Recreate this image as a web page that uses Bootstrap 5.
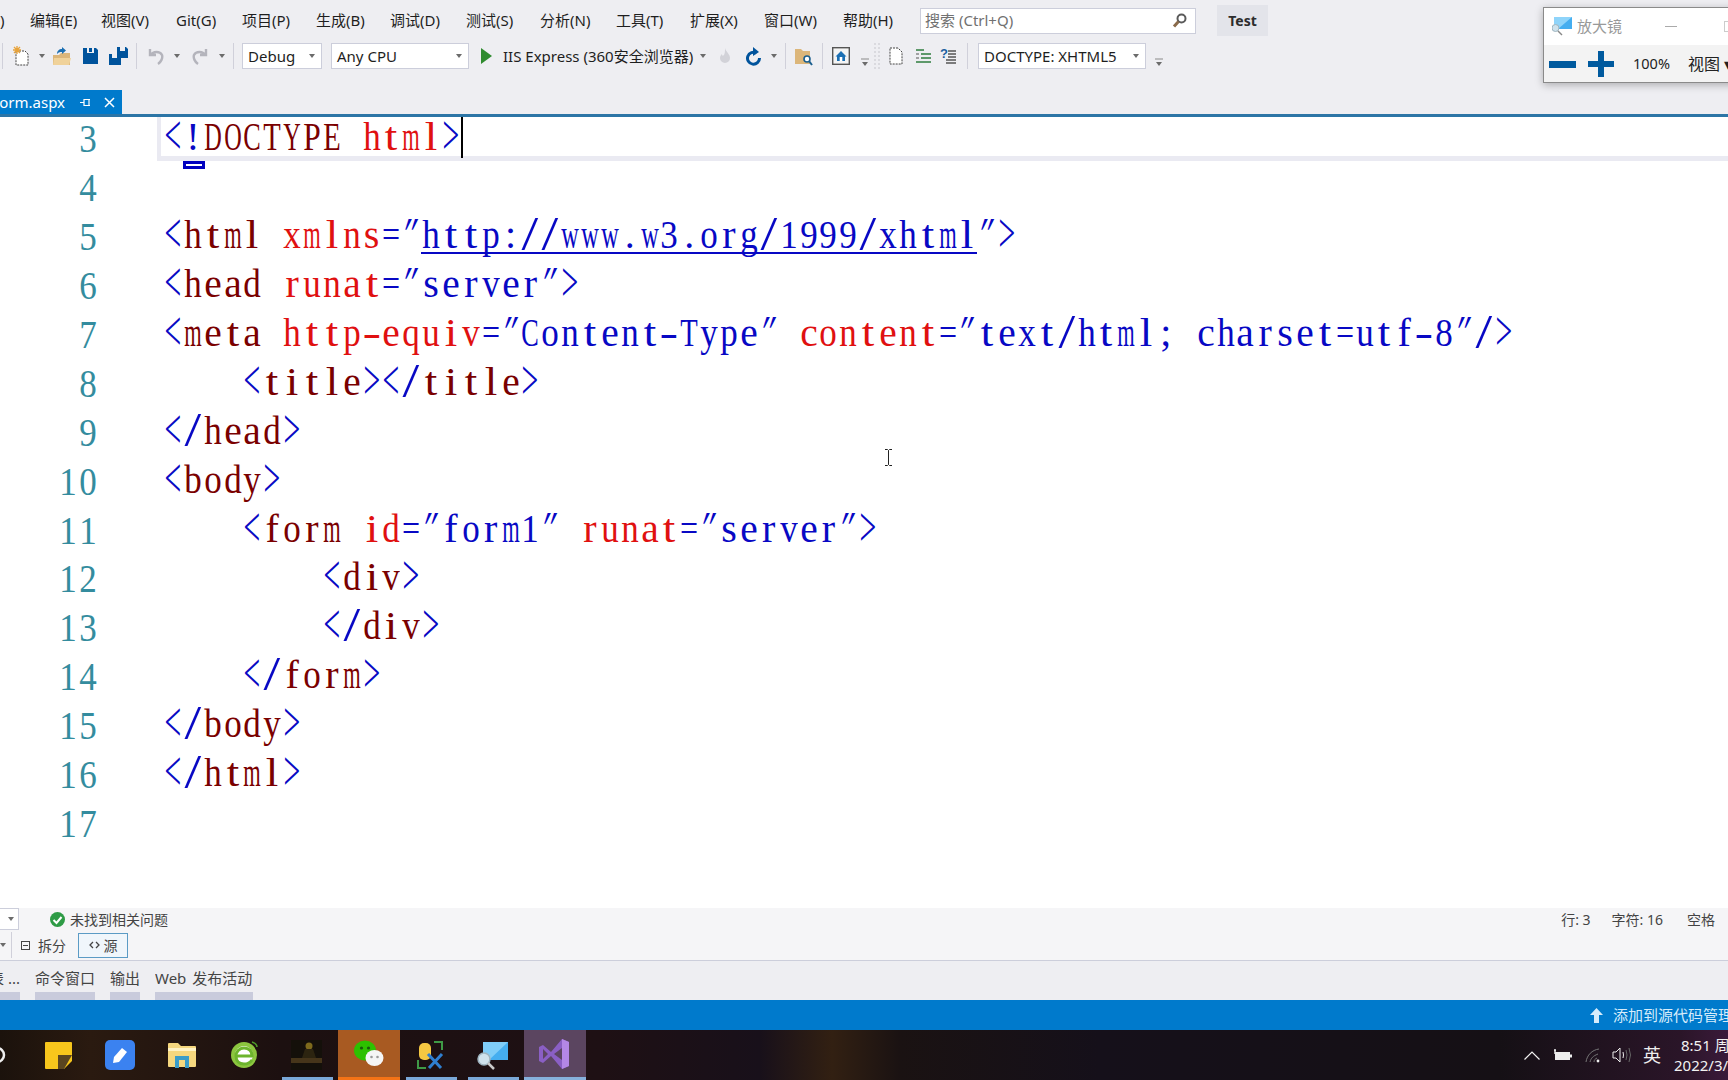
<!DOCTYPE html>
<html lang="zh-CN">
<head>
<meta charset="utf-8">
<title>WebForm.aspx</title>
<link href="https://cdn.jsdelivr.net/npm/bootstrap@5.3.0/dist/css/bootstrap.min.css" rel="stylesheet">
<style>
html,body{height:100%}
body{width:1728px;height:1080px;overflow:hidden;background:#eeeef2;font-family:"Noto Sans","Noto Sans CJK SC",sans-serif;color:#1e1e1e;font-size:15px;position:relative}
.vs-head{height:114px;flex:none}
.menu-row{height:41px;padding-left:0}
.menu-it{white-space:nowrap;line-height:1}
.menu-a{width:30px}.w71{width:71px}.w75{width:75px}.w66{width:66px}.w74{width:74px}.w76{width:76px}.w79{width:79px}.w77{width:77px}
.search-box{width:276px;height:26px;background:#fff;border:1px solid #cccedb;color:#717171;padding:0 8px 0 4px}
.test-btn{width:51px;height:31px;margin-left:21px;background:#e3e4ea;font-weight:700;font-size:14px;color:#2d2d2d}
.tool-row{height:30px;padding-left:2px}
.tool-row svg{flex:none;display:block}
.tsep{width:1px;height:26px;background:#d0d0da;flex:none}
.combo{height:26px;background:#fff;border:1px solid #cccedb;padding:0 6px 0 5px;flex:none;white-space:nowrap}
.combo-d{width:80px}.combo-c{width:138px}.combo-t{width:168px}
.caret-d{width:0;height:0;border-left:3.5px solid transparent;border-right:3.5px solid transparent;border-top:4px solid #6b6b6b;flex:none}
.iis-t{white-space:nowrap;width:191px;flex:none}
.l4{margin-left:4px}.l5{margin-left:5px}.l6{margin-left:6px}.l7{margin-left:7px}.l8{margin-left:8px}.l9{margin-left:9px}.l10{margin-left:10px}.l11{margin-left:11px}.l12{margin-left:12px}.l13{margin-left:13px}.l14{margin-left:14px}.l15{margin-left:15px}.l31{margin-left:31px}
.drop-ic{margin-top:12px}
.tab-row{height:24px;margin-top:19px}
.doc-tab{width:122px;height:24px;background:#007acc;color:#fff;overflow:hidden}
.doc-name{white-space:nowrap;width:65px;display:flex;justify-content:flex-end;flex:none;font-size:15px}
.editor{flex:1 1 0;background:#fff;border-top:3px solid #2c75a6;position:relative;overflow:hidden;min-height:0}
.cur-line{position:absolute;left:157px;right:0;top:0;height:44px;border-left:4px solid #eaeaf2;border-bottom:5px solid #eaeaf2}
.caret-bar{position:absolute;left:461px;top:0;width:2px;height:41px;background:#000}
.squig{position:absolute;left:183px;top:44px;width:22px;height:8px;border:3px solid #0000c0}
.code-wrap{margin-top:-4px;font-family:"Liberation Serif","Noto Sans CJK SC",serif;font-size:40px}
.gut{width:98px;text-align:right;color:#348c9e;flex:none;padding-top:2px}
.codepane{margin-left:65px}
.cl{height:48.95px;line-height:48.95px;white-space:pre}
.gc{display:inline-flex;justify-content:center;width:19.87px;white-space:pre;vertical-align:baseline}
.k-t{color:#7a0000}.k-d{color:#0808c4}.k-a{color:#e01010}
.k-l{color:#0808c4;display:inline-block;background:linear-gradient(#0808c4,#0808c4) 0 41px/100% 2px no-repeat}
.stat-strip{height:53px;flex:none;background:#f5f5f7;border-bottom:1px solid #cccedb;font-size:14px;color:#444}
.stat-a{height:22px}
.stat-b{height:30px}
.left-combo{width:19px;height:22px;background:#fff;border:1px solid #cccedb;border-left:0;flex:none}
.ok-txt{margin-left:5px;color:#444}
.src-btn{width:50px;height:25px;border:1px solid #5b9bc5;background:#f0f6fb;margin-left:12px}
.pos-a{margin-left:auto}
.pos-t{white-space:nowrap}
.pos-1{margin-right:21px}.pos-2{margin-right:24px}.pos-3{margin-right:13px}
.bot-tabs{height:39px;flex:none;font-size:15px;color:#444}
.bt{height:39px;padding-top:6px;white-space:nowrap;line-height:22px;background:linear-gradient(#c9cbdc,#c9cbdc) 0 100%/100% 8px no-repeat;overflow:hidden;flex:none}
.bt-0{width:20px;display:flex;justify-content:flex-end}
.bt-1{width:60px;margin-left:15px}.bt-2{width:30px;margin-left:15px}.bt-3{width:98px;margin-left:15px;word-spacing:2px}
.blue-bar{height:30px;flex:none;background:#007acc;color:#d6ecfb;white-space:nowrap;padding-left:1590px;overflow:hidden}
.blue-bar svg{flex:none}
.task{height:50px;flex:none;background:linear-gradient(90deg,#1b120c 0,#2a1a10 90px,#1c1010 280px,#1e1014 600px,#18101a 760px,#322012 832px,#1a1212 900px,#15101a 1100px,#151015 1500px,#2a1528 1680px,#3a1a3a 1728px);color:#f2f2f2;overflow:hidden}
.tk-0{width:28px;flex:none;overflow:hidden}
.tk-c{width:62px;height:50px;flex:none;padding-right:2px}
.tk-run{background:linear-gradient(#7aa8d8,#7aa8d8) center bottom/51px 3px no-repeat}
.tk-wx{background:#a85a22;border-bottom:3px solid #f47316}
.tk-vs{background:#5b4560;border-bottom:3px solid #86b0dc}
.tray{margin-left:auto;width:204px;flex:none}
.tray svg{flex:none}
.ime{font-size:18px;margin-left:11px;color:#eee}
.clock{margin-left:13px;font-size:15px;line-height:20px;white-space:nowrap;width:54px;flex:none}
.clock-1{padding-left:7px}
.mag-win{position:absolute;left:1543px;top:7px;width:200px;height:76px;background:#f3f3f3;border:1px solid #8a8a8a;box-shadow:0 2px 8px rgba(0,0,0,.28)}
.mag-top{height:37px;background:#fff;color:#999;padding-left:8px}
.mag-bot{height:38px;padding-left:5px}
.mag-title{margin-left:5px}
.mag-min{width:12px;height:1px;background:#aaa;margin-left:43px}
.mag-max{width:11px;height:11px;border:1px solid #ccc;margin-left:47px}
.mag-pct{margin-left:19px;color:#222;font-size:14.5px}
.mag-view{margin-left:18px;font-size:16px;color:#222;white-space:nowrap}
.ibeam{position:absolute;left:884px;top:449px}
</style>
</head>
<body class="d-flex flex-column">

<header class="vs-head">
  <div class="menu-row d-flex align-items-center">
    <span class="menu-it menu-a">)</span>
    <span class="menu-it w71">编辑(E)</span>
    <span class="menu-it w75">视图(V)</span>
    <span class="menu-it w66">Git(G)</span>
    <span class="menu-it w74">项目(P)</span>
    <span class="menu-it w74">生成(B)</span>
    <span class="menu-it w76">调试(D)</span>
    <span class="menu-it w74">测试(S)</span>
    <span class="menu-it w76">分析(N)</span>
    <span class="menu-it w74">工具(T)</span>
    <span class="menu-it w74">扩展(X)</span>
    <span class="menu-it w79">窗口(W)</span>
    <span class="menu-it w77">帮助(H)</span>
    <div class="search-box d-flex align-items-center justify-content-between">
      <span>搜索 (Ctrl+Q)</span>
      <svg width="15" height="16" viewBox="0 0 15 16"><circle cx="9.500" cy="5.500" r="4" fill="none" stroke="#5a5a5a" stroke-width="2"/><path d="M6.500 8.500 2 13.500" stroke="#8a6a4a" stroke-width="3"/></svg>
    </div>
    <div class="test-btn d-flex align-items-center justify-content-center">Test</div>
  </div>

  <div class="tool-row d-flex align-items-center">
    <span class="tsep"></span>
    <svg class="l10" width="17" height="20" viewBox="0 0 17 20"><path d="M3 5h9l3 3v11H3z" fill="#fff" stroke="#444" stroke-dasharray="2 1"/><path d="M4 0v8M0 4h8M1 1l6 6M7 1 1 7" stroke="#e8a33a" stroke-width="1.300"/></svg>
    <span class="caret-d l9"></span>
    <svg class="l7" width="20" height="20" viewBox="0 0 20 20"><path d="M1 9h6l2-2h9v12H1z" fill="#dcb67a"/><path d="M2 12h17l-2 7H1z" fill="#f0d29a"/><path d="M5 8c0-3 2-5 5-5V1l4 3.500L10 8V6c-2 0-3 0-5 2z" fill="#1b6fb3"/></svg>
    <svg class="l11" width="15" height="18" viewBox="0 0 15 18"><path d="M0 1h4v5h7V1h2l2 2v14H0z" fill="#00539c"/><rect x="6" y="1" width="3" height="4" fill="#00539c"/></svg>
    <svg class="l11" width="19" height="18" viewBox="0 0 19 18"><path d="M8 0h3v4h5V0h1l2 2v9H8z" fill="#00539c"/><path d="M0 7h3v4h6V7h1l2 2v9H0z" fill="#00539c"/></svg>
    <span class="tsep l8"></span>
    <svg class="l11" width="16" height="18" viewBox="0 0 16 18"><path d="M2 2v6h6M3 8c2-4 9-4 11 0 1 3-1 7-4 9" fill="none" stroke="#b4b4bc" stroke-width="2.400"/></svg>
    <span class="caret-d l10"></span>
    <svg class="l12" width="16" height="18" viewBox="0 0 16 18"><path d="M14 2v6H8M13 8C11 4 4 4 2 8c-1 3 1 7 4 9" fill="none" stroke="#b4b4bc" stroke-width="2.400"/></svg>
    <span class="caret-d l11"></span>
    <span class="tsep l8"></span>
    <div class="combo combo-d l8 d-flex align-items-center justify-content-between"><span>Debug</span><span class="caret-d"></span></div>
    <div class="combo combo-c l9 d-flex align-items-center justify-content-between"><span>Any CPU</span><span class="caret-d"></span></div>
    <svg class="l12" width="11" height="16" viewBox="0 0 11 16"><path d="M0 0l11 8L0 16z" fill="#2f8b2f"/></svg>
    <span class="iis-t l11">IIS Express (360安全浏览器)</span>
    <span class="caret-d l6"></span>
    <svg class="l13" width="12" height="16" viewBox="0 0 12 16"><path d="M6 0c1 4 5 6 5 10a5 5 0 0 1-10 0c0-2 1-3 2-4 0 2 1 2 2 1 1-2 1-4 1-7z" fill="#d2d2d8"/></svg>
    <svg class="l14" width="17" height="19" viewBox="0 0 17 19"><path d="M11.500 6A6 6 0 1 0 14.500 11" fill="none" stroke="#00539c" stroke-width="3"/><path d="M8 0v9l6-4z" fill="#00539c"/></svg>
    <span class="caret-d l9"></span>
    <span class="tsep l8"></span>
    <svg class="l9" width="18" height="19" viewBox="0 0 18 19"><path d="M0 2h6l2 2h7v13H0z" fill="#dcb67a"/><circle cx="12" cy="12" r="3" fill="#fff" stroke="#1b5f8f" stroke-width="1.600"/><path d="M14 14l3 4" stroke="#1b5f8f" stroke-width="2"/></svg>
    <span class="tsep l9"></span>
    <svg class="l9" width="18" height="18" viewBox="0 0 18 18"><rect x=".7" y=".7" width="16.600" height="16.600" fill="#f4f4f4" stroke="#555" stroke-width="1.400"/><path d="M9 4 3.500 9.500H5V14h8V9.500h1.500z" fill="#1b6fb3"/><rect x="7.700" y="10" width="2.600" height="4" fill="#fff"/></svg>
    <svg class="l10 drop-ic" width="10" height="9" viewBox="0 0 10 9"><path d="M1 1h8" stroke="#8a8a8a"/><path d="M2 4h6L5 8z" fill="#6b6b6b"/></svg>
    <svg class="l4" width="6" height="26" viewBox="0 0 6 26"><path d="M1 0v26M5 0v26" stroke="#c6c6cc" stroke-dasharray="2 2"/></svg>
    <svg class="l9" width="14" height="18" viewBox="0 0 14 18"><path d="M1 1h8l4 4v12H1z" fill="#fff" stroke="#444" stroke-dasharray="2 1"/></svg>
    <svg class="l13" width="15" height="14" viewBox="0 0 15 14"><path d="M0 1h8M5 5h10M5 9h10M0 13h15" stroke="#2f7d3f" stroke-width="1.400"/><path d="M0 5h3M0 9h3" stroke="#555"/></svg>
    <svg class="l9" width="16" height="16" viewBox="0 0 16 16"><text x="0" y="10" font-size="13" font-weight="700" fill="#1b5f9f" font-family="Liberation Sans">?</text><path d="M8 3h8M8 6h8M8 9h8M6 12h10M6 15h10" stroke="#555" stroke-width="1.300"/></svg>
    <span class="tsep l11"></span>
    <div class="combo combo-t l10 d-flex align-items-center justify-content-between"><span>DOCTYPE: XHTML5</span><span class="caret-d"></span></div>
    <svg class="l8 drop-ic" width="10" height="9" viewBox="0 0 10 9"><path d="M1 1h8" stroke="#8a8a8a"/><path d="M2 4h6L5 8z" fill="#6b6b6b"/></svg>
  </div>

  <div class="tab-row d-flex">
    <div class="doc-tab d-flex align-items-center">
      <span class="doc-name">orm.aspx</span>
      <svg class="l15" width="11" height="11" viewBox="0 0 11 11"><path d="M0 5.500h4M4 2v7M4 2.500h6M4 8.500h6M9 2v7" fill="none" stroke="#fff" stroke-width="1.200"/></svg>
      <svg class="l13" width="11" height="11" viewBox="0 0 11 11"><path d="M1 1l9 9M10 1l-9 9" stroke="#fff" stroke-width="1.500"/></svg>
    </div>
  </div>
</header>

<main class="editor">
  <div class="cur-line"></div>
  <div class="code-wrap d-flex">
    <div class="gut">
      <div class="cl">3</div><div class="cl">4</div><div class="cl">5</div><div class="cl">6</div><div class="cl">7</div><div class="cl">8</div><div class="cl">9</div><div class="cl">10</div><div class="cl">11</div><div class="cl">12</div><div class="cl">13</div><div class="cl">14</div><div class="cl">15</div><div class="cl">16</div><div class="cl">17</div>
    </div>
    <div class="codepane">
<div class="cl"><span class="k-d">&lt;!</span><span class="k-t">DOCTYPE</span> <span class="k-a">html</span><span class="k-d">&gt;</span></div>
<div class="cl"></div>
<div class="cl"><span class="k-d">&lt;</span><span class="k-t">html</span> <span class="k-a">xmlns</span><span class="k-d">="</span><span class="k-l">http://www.w3.org/1999/xhtml</span><span class="k-d">"&gt;</span></div>
<div class="cl"><span class="k-d">&lt;</span><span class="k-t">head</span> <span class="k-a">runat</span><span class="k-d">="server"&gt;</span></div>
<div class="cl"><span class="k-d">&lt;</span><span class="k-t">meta</span> <span class="k-a">http-equiv</span><span class="k-d">="Content-Type"</span> <span class="k-a">content</span><span class="k-d">="text/html; charset=utf-8"/&gt;</span></div>
<div class="cl">    <span class="k-d">&lt;</span><span class="k-t">title</span><span class="k-d">&gt;&lt;/</span><span class="k-t">title</span><span class="k-d">&gt;</span></div>
<div class="cl"><span class="k-d">&lt;/</span><span class="k-t">head</span><span class="k-d">&gt;</span></div>
<div class="cl"><span class="k-d">&lt;</span><span class="k-t">body</span><span class="k-d">&gt;</span></div>
<div class="cl">    <span class="k-d">&lt;</span><span class="k-t">form</span> <span class="k-a">id</span><span class="k-d">="form1"</span> <span class="k-a">runat</span><span class="k-d">="server"&gt;</span></div>
<div class="cl">        <span class="k-d">&lt;</span><span class="k-t">div</span><span class="k-d">&gt;</span></div>
<div class="cl">        <span class="k-d">&lt;/</span><span class="k-t">div</span><span class="k-d">&gt;</span></div>
<div class="cl">    <span class="k-d">&lt;/</span><span class="k-t">form</span><span class="k-d">&gt;</span></div>
<div class="cl"><span class="k-d">&lt;/</span><span class="k-t">body</span><span class="k-d">&gt;</span></div>
<div class="cl"><span class="k-d">&lt;/</span><span class="k-t">html</span><span class="k-d">&gt;</span></div>
<div class="cl"></div>
    </div>
  </div>
  <div class="caret-bar"></div>
  <div class="squig"></div>
</main>

<section class="stat-strip">
  <div class="stat-a d-flex align-items-center">
    <div class="left-combo d-flex align-items-center justify-content-end pe-1"><span class="caret-d"></span></div>
    <svg class="l31" width="15" height="15" viewBox="0 0 15 15"><circle cx="7.500" cy="7.500" r="7.500" fill="#2e9b46"/><path d="M3.500 8l3 3 5-6" fill="none" stroke="#fff" stroke-width="2"/></svg>
    <span class="ok-txt">未找到相关问题</span>
    <div class="pos-a d-flex"><span class="pos-t pos-1">行: 3</span><span class="pos-t pos-2">字符: 16</span><span class="pos-t pos-3">空格</span></div>
  </div>
  <div class="stat-b d-flex align-items-center">
    <span class="caret-d"></span>
    <span class="tsep l5"></span>
    <svg class="l9" width="9" height="9" viewBox="0 0 9 9"><rect x=".5" y=".5" width="8" height="8" fill="none" stroke="#444"/><path d="M2 4.500h5" stroke="#444"/></svg>
    <span class="l8">拆分</span>
    <div class="src-btn d-flex align-items-center justify-content-center">
      <svg width="11" height="8" viewBox="0 0 11 8"><path d="M4 1 1 4l3 3M7 1l3 3-3 3" fill="none" stroke="#444" stroke-width="1.300"/></svg>
      <span class="l4">源</span>
    </div>
  </div>
</section>

<nav class="bot-tabs d-flex">
  <span class="bt bt-0"><span>表 ...</span></span>
  <span class="bt bt-1">命令窗口</span>
  <span class="bt bt-2">输出</span>
  <span class="bt bt-3">Web 发布活动</span>
</nav>

<div class="blue-bar d-flex align-items-center">
  <svg width="13" height="15" viewBox="0 0 13 15"><path d="M6.500 0 13 7H9v8H4V7H0z" fill="#d6ecfb"/></svg>
  <span class="l10">添加到源代码管理</span>
</div>

<footer class="task d-flex align-items-center">
  <div class="tk-0 d-flex">
    <svg width="10" height="20" viewBox="0 0 10 20"><circle cx="-3" cy="10" r="7" fill="none" stroke="#eee" stroke-width="2.500"/></svg>
  </div>
  <div class="tk-c d-flex align-items-center justify-content-center">
    <svg width="27" height="27" viewBox="0 0 27 27"><path d="M0 1q0-1 1-1h25q1 0 1 1v18l-8 8H1q-1 0-1-1z" fill="#f7c61c"/><path d="M13 27V13h14l-8 14z" fill="#5a4520"/></svg>
  </div>
  <div class="tk-c d-flex align-items-center justify-content-center">
    <svg width="30" height="30" viewBox="0 0 30 30"><rect width="30" height="30" rx="5" fill="#3b82f0"/><path d="M17 8l5 4-8 10-6 1 1-6z" fill="#fff"/></svg>
  </div>
  <div class="tk-c d-flex align-items-center justify-content-center">
    <svg width="28" height="26" viewBox="0 0 28 26"><path d="M0 2q0-1 1-1h9l3 3h14q1 0 1 1v19q0 1-1 1H1q-1 0-1-1z" fill="#f5d77e"/><path d="M0 6h28v3H0z" fill="#fff3c4"/><path d="M7 26V14h14v12h-4v-8h-6v8z" fill="#3a9cc8"/></svg>
  </div>
  <div class="tk-c d-flex align-items-center justify-content-center">
    <svg width="28" height="30" viewBox="0 0 28 30"><circle cx="14" cy="15" r="13" fill="#8cc63f"/><circle cx="14" cy="15" r="9" fill="#fff"/><path d="M6 16h16c0-5-3-8-8-8s-8 4-8 8c0 5 3 8 8 8 3 0 6-1 8-4" fill="none" stroke="#6db52d" stroke-width="3"/><path d="M22 2c3 1 5 3 5 5" fill="none" stroke="#4e9a2a" stroke-width="1.500"/></svg>
  </div>
  <div class="tk-c tk-run d-flex align-items-center justify-content-center">
    <svg width="31" height="30" viewBox="0 0 31 30"><rect width="31" height="30" fill="#14100a"/><circle cx="18" cy="6" r="3.500" fill="#7d6a1c"/><path d="M14 9l8 0 3 9H11z" fill="#2c2410"/><rect y="18" width="31" height="5" fill="#46351a"/></svg>
  </div>
  <div class="tk-c tk-wx d-flex align-items-center justify-content-center">
    <svg width="31" height="28" viewBox="0 0 31 28"><ellipse cx="12" cy="10.500" rx="11" ry="10" fill="#2dc100"/><circle cx="8.500" cy="8" r="1.600" fill="#185c0c"/><circle cx="15.500" cy="8" r="1.600" fill="#185c0c"/><ellipse cx="21.500" cy="18" rx="9" ry="8" fill="#f5f5f5"/><circle cx="18.500" cy="17" r="1.300" fill="#999"/><circle cx="24.500" cy="17" r="1.300" fill="#999"/></svg>
  </div>
  <div class="tk-c tk-run d-flex align-items-center justify-content-center">
    <svg width="28" height="30" viewBox="0 0 28 30"><rect x="3" y="3" width="12" height="17" rx="5" fill="#f5c842"/><path d="M18 2h8v8M2 20v8h8" fill="none" stroke="#3f9a46" stroke-width="2"/><path d="M12 14l13 14M26 14 13 28" stroke="#2f7fd0" stroke-width="3"/></svg>
  </div>
  <div class="tk-c tk-run d-flex align-items-center justify-content-center">
    <svg width="31" height="30" viewBox="0 0 31 30"><rect x="6" y="2" width="25" height="18" fill="#45aef0"/><path d="M6 2h25L12 20H6z" fill="#7fcdf8"/><circle cx="7" cy="19" r="6" fill="#cfe2ec" stroke="#9fb5c0" stroke-width="1.500"/><path d="M11 23l6 6" stroke="#c9c9c9" stroke-width="2.500"/></svg>
  </div>
  <div class="tk-c tk-vs d-flex align-items-center justify-content-center">
    <svg width="30" height="32" viewBox="0 0 30 32"><path d="M0 9l4-2 8 7L23 1l7 3v24l-7 3-11-13-8 7-4-2z" fill="#8a5fc4"/><path d="M23 1l7 3v24l-7 3z" fill="#b487e6"/><path d="M4 11v10l5-5zM23 10l-8 6 8 6z" fill="#5b4560"/></svg>
  </div>
  <div class="tray d-flex align-items-center">
    <svg width="16" height="9" viewBox="0 0 16 9"><path d="M.5 8.500 8 1l7.500 7.500" fill="none" stroke="#f2f2f2" stroke-width="1.200"/></svg>
    <svg class="l12" width="20" height="12" viewBox="0 0 20 12"><path d="M2 1h2M3 1v4" stroke="#eee" stroke-width="1.500"/><rect x="3" y="3" width="15" height="8" fill="#eee"/><rect x="18" y="5.500" width="2" height="3" fill="#eee"/></svg>
    <svg class="l13" width="15" height="15" viewBox="0 0 15 15"><path d="M1 14C2 7 7 2 14 1M5 14c1-4 3-6 8-8M9 14c0-2 1-3 3-4" fill="none" stroke="#777" stroke-width="1"/><circle cx="13" cy="13" r="1.400" fill="#eee"/></svg>
    <svg class="l12" width="20" height="16" viewBox="0 0 20 16"><path d="M1 5h3l4-4v14l-4-4H1z" fill="none" stroke="#eee"/><path d="M11 5q1 3 0 6" fill="none" stroke="#eee"/><path d="M14 3q2 5 0 10M17 1q3 7 0 14" fill="none" stroke="#666"/></svg>
    <span class="ime">英</span>
    <div class="clock"><div class="clock-1">8:51 周</div><div>2022/3/</div></div>
  </div>
</footer>

<aside class="mag-win">
  <div class="mag-top d-flex align-items-center">
    <svg width="20" height="19" viewBox="0 0 20 19"><rect x="2" width="18" height="12" fill="#45aef0"/><path d="M2 0h18L6 12H2z" fill="#8fd4fa"/><circle cx="3.500" cy="11" r="3.500" fill="#cfe2ec" stroke="#9fb5c0"/><path d="M6 14l4 4" stroke="#888" stroke-width="1.500"/></svg>
    <span class="mag-title">放大镜</span>
    <span class="mag-min"></span>
    <span class="mag-max"></span>
  </div>
  <div class="mag-bot d-flex align-items-center">
    <svg width="27" height="7" viewBox="0 0 27 7"><rect width="27" height="7" fill="#005a9e"/></svg>
    <svg class="l12" width="26" height="26" viewBox="0 0 26 26"><path d="M0 10h10V0h6v10h10v6H16v10h-6V16H0z" fill="#005a9e"/></svg>
    <span class="mag-pct">100%</span>
    <span class="mag-view">视图 ▾</span>
  </div>
</aside>

<svg class="ibeam" width="9" height="17" viewBox="0 0 9 17"><path d="M1 .5h2.500l1 1 1-1H8M4.500 1.500v14M1 16.500h2.500l1-1 1 1H8" fill="none" stroke="#222"/></svg>

<script src="https://cdn.jsdelivr.net/npm/bootstrap@5.3.0/dist/js/bootstrap.bundle.min.js"></script>
<script>
/* SimSun-style half-width cells: every code character sits in a fixed cell, fitted to the cell's width. */
(function(){
  var ctx=document.createElement('canvas').getContext('2d');
  ctx.font='40px "Liberation Serif"';
  var MAX=17.5,MIN=12.5;
  var special={
    '<':'translateY(-1.5px) scale(.74,1.4)',
    '>':'translateY(-1.5px) scale(.74,1.4)',
    '"':'translate(-4px,-1px) skewX(-22deg) scale(.85,1.15)',
    '/':'translateY(-1px) scale(1.5,1.2)',
    '-':'scaleX(1.4)',
    '=':'scaleX(.8)'
  };
  function cell(ch){
    var s=document.createElement('span');
    s.className='gc';
    s.textContent=ch;
    var w=ctx.measureText(ch).width,t='';
    if(special[ch]){t=special[ch];}
    else if(w>MAX){t='scaleX('+(MAX/w).toFixed(3)+')';}
    else if(/[a-z1]/.test(ch)&&w<MIN){t='scaleX('+(MIN/w).toFixed(3)+')';}
    if(t){s.style.transform=t;}
    return s;
  }
  function walk(n){
    Array.prototype.slice.call(n.childNodes).forEach(function(c){
      if(c.nodeType===3){
        var f=document.createDocumentFragment();
        Array.from(c.nodeValue).forEach(function(ch){f.appendChild(cell(ch));});
        n.replaceChild(f,c);
      }else if(c.nodeType===1){walk(c);}
    });
  }
  document.querySelectorAll('.cl').forEach(walk);
})();
</script>
</body>
</html>
